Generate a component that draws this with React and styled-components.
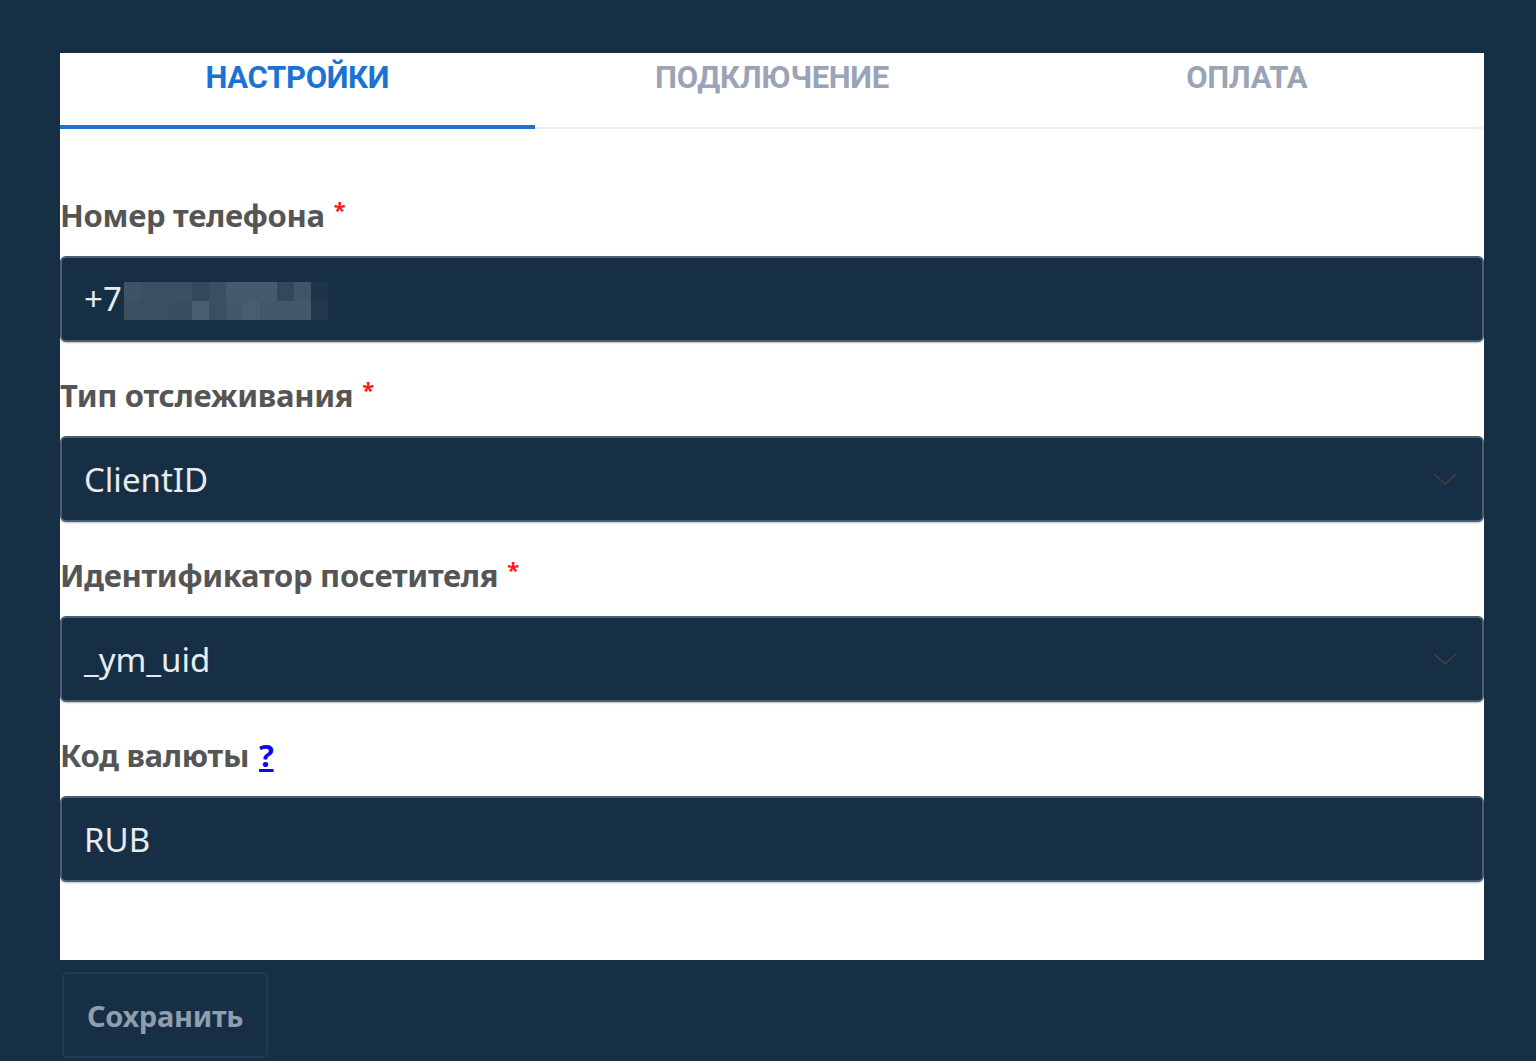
import React, { useState } from "react";
import styled, { createGlobalStyle, css } from "styled-components";

const GlobalStyle = createGlobalStyle`
  html, body {
    margin: 0;
    padding: 0;
    background: #172f45;
    font-family: "Noto Sans", "Open Sans", sans-serif;
  }
`;

const Page = styled.div`
  min-height: 1061px;
  padding: 53px 52px 0 60px;
  box-sizing: border-box;
`;

const Panel = styled.div`
  background: #ffffff;
  height: 907px;
  box-sizing: border-box;
`;

const TabBar = styled.div`
  display: grid;
  grid-template-columns: repeat(3, 1fr);
  border-bottom: 2px solid #eeeeee;
`;

const Tab = styled.button`
  height: 76px;
  border: none;
  background: none;
  padding: 0 0 24px;
  font-family: "Roboto", sans-serif;
  font-weight: 700;
  font-size: 31px;
  letter-spacing: -0.3px;
  color: #9aa4b6;
  cursor: pointer;
  border-bottom: 4px solid transparent;
  margin-bottom: -2px;

  ${(props) =>
    props.active &&
    css`
      color: #1a73d2;
      border-bottom-color: #1a73d2;
    `};
`;

const Form = styled.div`
  display: flex;
  flex-direction: column;
  padding-top: 71px;
`;

const Field = styled.div`
  display: flex;
  flex-direction: column;
  gap: 26px;
  margin-bottom: 38px;
`;

const Label = styled.label`
  font-weight: 700;
  font-size: 31px;
  line-height: 30px;
  color: #555555;
  letter-spacing: -0.3px;
`;

const Required = styled.span`
  color: #ff1a1a;
  font-size: 22px;
  vertical-align: top;
  margin-left: 9px;
  position: relative;
  top: -6px;
`;

const HelpLink = styled.a`
  color: #0a0ae8;
  text-decoration: underline;
  margin-left: 10px;
`;

const InputBox = styled.div`
  height: 86px;
  box-sizing: border-box;
  background: #172f45;
  border: 2px solid #4a5d72;
  border-radius: 6px;
  box-shadow: 0 1px 2px rgba(0, 0, 0, 0.25);
  display: flex;
  align-items: center;
  padding: 0 24px 0 22px;
  color: #e8ecef;
  font-size: 33px;
`;

const Value = styled.span`
  flex: 1;
`;

const Chevron = styled.svg`
  width: 26px;
  height: 16px;
  flex: none;
`;

const Mosaic = styled.div`
  display: inline-grid;
  grid-template-columns: repeat(12, 17px);
  grid-template-rows: repeat(2, 19px);
  vertical-align: middle;
  margin-left: 2px;
  position: relative;
  top: -2px;
`;

const Cell = styled.span`
  background: ${(props) => props.shade};
`;

const SaveButton = styled.button`
  margin: 12px 0 0 2px;
  width: 206px;
  height: 86px;
  background: #172f45;
  border: 2px solid #213a52;
  border-radius: 5px;
  color: #8f9eac;
  font-family: "Noto Sans", sans-serif;
  font-weight: 700;
  font-size: 29px;
  letter-spacing: -0.3px;
  cursor: pointer;
`;

const shades = [
  "#3e5366", "#3c5063", "#3c5063", "#3c5063", "#33495b", "#3a4f61",
  "#455a6c", "#455a6c", "#455a6c", "#33485a", "#405568", "#1f3447",
  "#3a4f61", "#3a4f61", "#3a4f61", "#384d5f", "#4a5f70", "#3a4f61",
  "#43586a", "#485d6f", "#43586a", "#43586a", "#43586a", "#223749",
];

const ChevronIcon = () => (
  <Chevron viewBox="0 0 26 16">
    <path d="M2 3 L13 13 L24 3" fill="none" stroke="#4b3d42" strokeWidth="1.6" />
  </Chevron>
);

const tabs = ["НАСТРОЙКИ", "ПОДКЛЮЧЕНИЕ", "ОПЛАТА"];

const App = () => {
  const [activeTab, setActiveTab] = useState(0);

  return (
    <Page>
      <GlobalStyle />
      <Panel>
        <TabBar>
          {tabs.map((tab, index) => (
            <Tab
              key={tab}
              active={index === activeTab}
              onClick={() => setActiveTab(index)}
            >
              {tab}
            </Tab>
          ))}
        </TabBar>
        <Form>
          <Field>
            <Label>
              Номер телефона<Required>*</Required>
            </Label>
            <InputBox>
              <Value>
                +7
                <Mosaic>
                  {shades.map((shade, i) => (
                    <Cell key={i} shade={shade} />
                  ))}
                </Mosaic>
              </Value>
            </InputBox>
          </Field>
          <Field>
            <Label>
              Тип отслеживания<Required>*</Required>
            </Label>
            <InputBox>
              <Value>ClientID</Value>
              <ChevronIcon />
            </InputBox>
          </Field>
          <Field>
            <Label>
              Идентификатор посетителя<Required>*</Required>
            </Label>
            <InputBox>
              <Value>_ym_uid</Value>
              <ChevronIcon />
            </InputBox>
          </Field>
          <Field>
            <Label>
              Код валюты<HelpLink href="#">?</HelpLink>
            </Label>
            <InputBox>
              <Value>RUB</Value>
            </InputBox>
          </Field>
        </Form>
      </Panel>
      <SaveButton>Сохранить</SaveButton>
    </Page>
  );
};

export default App;
